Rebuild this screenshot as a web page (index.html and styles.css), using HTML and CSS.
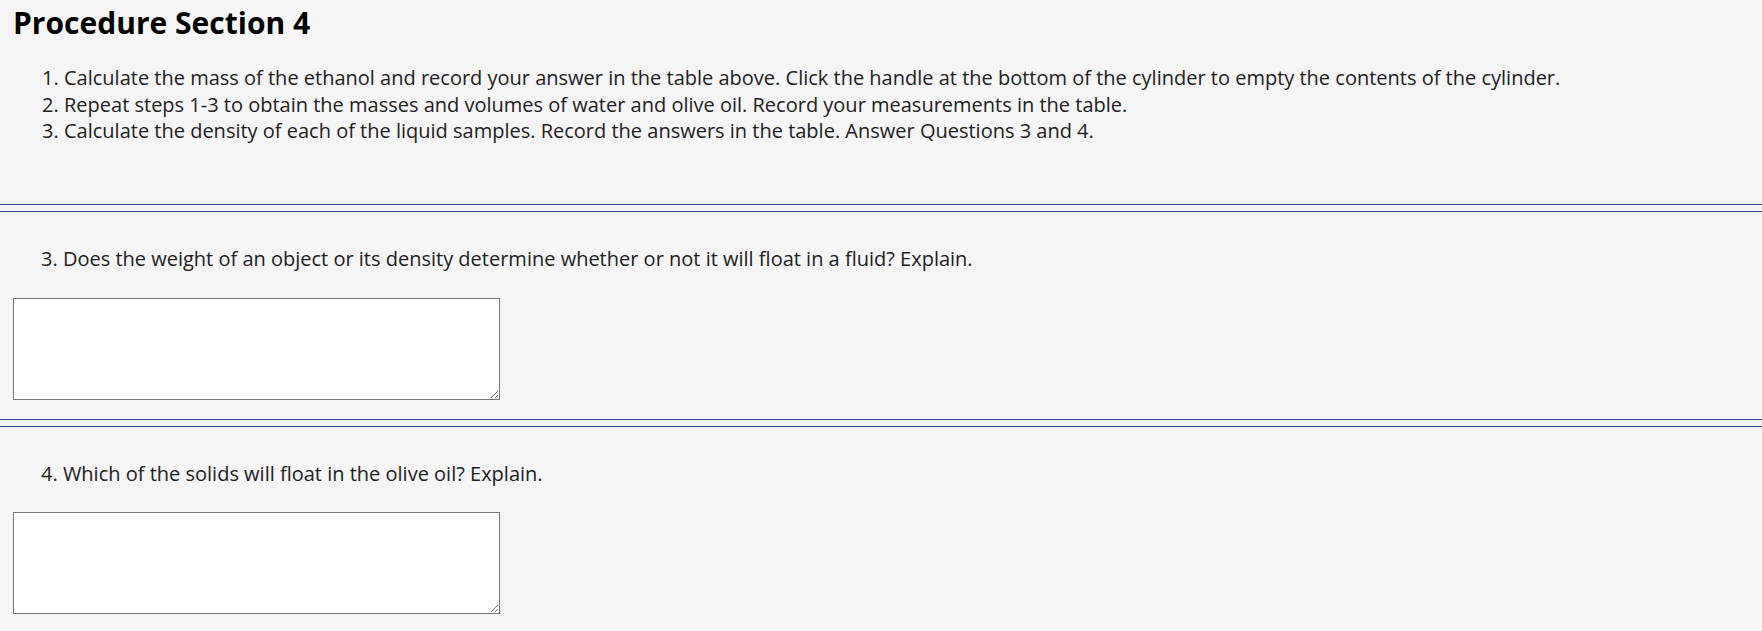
FILE: index.html
```html
<!DOCTYPE html>
<html lang="en">
<head>
  <meta charset="UTF-8" />
  <meta name="viewport" content="width=device-width, initial-scale=1.0"/>
  <title>Procedure Section 4</title>
  <link rel="stylesheet" href="styles.css">
</head>
<body>
  <h1 class="title">Procedure Section 4</h1>

  <!-- Steps -->
  <ol class="steps">
    <li>Calculate the mass of the ethanol and record your answer in the table above. Click the handle at the bottom of the cylinder to empty the contents of the cylinder.</li>
    <li>Repeat steps 1-3 to obtain the masses and volumes of water and olive oil. Record your measurements in the table.</li>
    <li>Calculate the density of each of the liquid samples. Record the answers in the table. Answer Questions 3 and 4.</li>
  </ol>

  <div class="divider"></div>

  <div class="question">
    <p class="prompt">3. Does the weight of an object or its density determine whether or not it will float in a fluid? Explain.</p>
    <textarea class="answer"></textarea>
  </div>

  <div class="divider"></div>

  <div class="question">
    <p class="prompt">4. Which of the solids will float in the olive oil? Explain.</p>
    <textarea class="answer"></textarea>
  </div>
</body>
</html>
```

FILE: styles.css
```css
body {
  margin: 0;
  background-color: #f5f5f5;
  color: #212121;
  font-family: "Open Sans", "Noto Sans", sans-serif;
  font-size: 20px;
}
.title {
  margin: 3px 0 0;
  padding-left: 13px;
  font-size: 30px;
  line-height: 40px;
  font-weight: 700;
  color: #000;
}
.steps {
  margin: 22px 0 59px;
  padding-left: 64px;
  line-height: 26.67px;
}
.divider {
  height: 6px;
  border-top: 1px solid #37457a;
  border-bottom: 1px solid #37457a;
}
.question {
  padding-bottom: 19px;
}
.prompt {
  margin: 34px 0 25px;
  padding-left: 41px;
  line-height: 26.67px;
}
.answer {
  display: block;
  box-sizing: border-box;
  width: 487px;
  height: 102px;
  margin-left: 13px;
  border: 1px solid #767676;
  border-radius: 0;
  background-color: #fff;
}
```
